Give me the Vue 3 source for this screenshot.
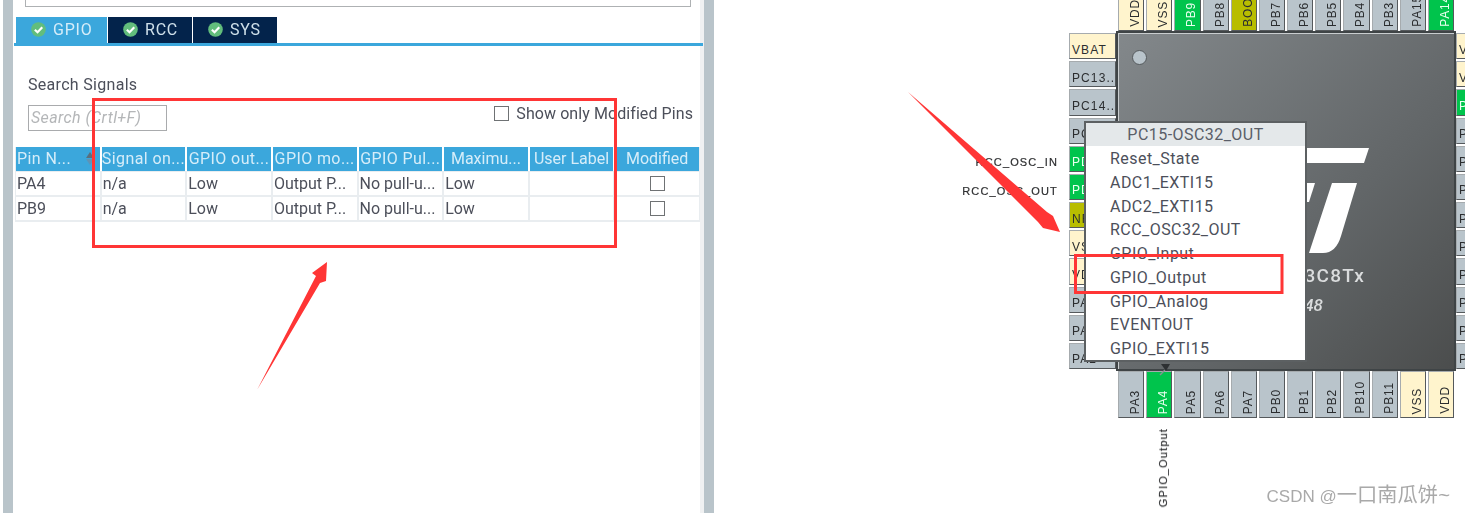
<script setup>
const tabs = [
  { name: 'GPIO', on: true },
  { name: 'RCC', on: false },
  { name: 'SYS', on: false }
]
const heads = ['Pin N...', 'Signal on...', 'GPIO out...', 'GPIO mo...', 'GPIO Pul...', 'Maximu...', 'User Label', 'Modified']
const rows = [
  ['PA4', 'n/a', 'Low', 'Output P...', 'No pull-u...', 'Low', ''],
  ['PB9', 'n/a', 'Low', 'Output P...', 'No pull-u...', 'Low', '']
]
const p = (n, c = 'gray') => ({ n, c })
const topPins = [p('VDD', 'yellow'), p('VSS', 'yellow'), p('PB9', 'green'), p('PB8'), p('BOOT0', 'olive'), p('PB7'), p('PB6'), p('PB5'), p('PB4'), p('PB3'), p('PA15'), p('PA14', 'green')]
const leftPins = [p('VBAT', 'yellow'), p('PC13..'), p('PC14..'), p('PC15..'), p('PD0..', 'green'), p('PD1..', 'green'), p('NRST', 'olive'), p('VSSA', 'yellow'), p('VDDA', 'yellow'), p('PA0..'), p('PA1'), p('PA2')]
const rightPins = [p('VDD', 'yellow'), p('VSS', 'yellow'), p('PA13', 'green'), p('PA12'), p('PA11'), p('PA10'), p('PA9'), p('PA8'), p('PB15'), p('PB14'), p('PB13'), p('PB12')]
const bottomPins = [p('PA3'), p('PA4', 'green'), p('PA5'), p('PA6'), p('PA7'), p('PB0'), p('PB1'), p('PB2'), p('PB10'), p('PB11'), p('VSS', 'yellow'), p('VDD', 'yellow')]
const menu = ['Reset_State', 'ADC1_EXTI15', 'ADC2_EXTI15', 'RCC_OSC32_OUT', 'GPIO_Input', 'GPIO_Output', 'GPIO_Analog', 'EVENTOUT', 'GPIO_EXTI15']
</script>

<template>
  <div class="page">
    <div class="strip strip-left"></div>
    <section class="panel">
      <div class="field"></div>
      <nav class="tabs">
        <div v-for="t in tabs" :key="t.name" class="tab" :class="{ active: t.on }">
          <svg class="tick" viewBox="0 0 14 14" width="15" height="15">
            <circle cx="7" cy="7" r="6.8" fill="#62bd7c" />
            <path d="M3.6 7.2 6.1 9.6 10.5 4.9" fill="none" stroke="#fff" stroke-width="2" />
          </svg>
          <span>{{ t.name }}</span>
        </div>
      </nav>
      <div class="tab-line"></div>
      <div class="filters">
        <div class="search">
          <label>Search Signals</label>
          <div class="search-box">Search (Crtl+F)</div>
        </div>
        <div class="only">
          <span class="box"></span>
          <span>Show only Modified Pins</span>
        </div>
      </div>
      <div class="table">
        <div class="thead">
          <div v-for="(h, i) in heads" :key="h" class="th" :class="{ first: i === 0, wide: i < 5 }">
            {{ h }}
            <span v-if="i === 0" class="sort"><i class="up"></i><i class="down"></i></span>
          </div>
        </div>
        <div v-for="r in rows" :key="r[0]" class="tr">
          <div v-for="(c, i) in r" :key="i" class="td">{{ c }}</div>
          <div class="td check"><span class="box"></span></div>
        </div>
      </div>
    </section>
    <div class="strip strip-right"></div>

    <section class="board">
      <div class="pins top">
        <div v-for="x in topPins" :key="x.n" class="pin v" :class="x.c"><span>{{ x.n }}</span></div>
      </div>
      <div class="pins left">
        <div v-for="x in leftPins" :key="x.n" class="pin h" :class="x.c"><span>{{ x.n }}</span></div>
      </div>
      <div class="chip">
        <div class="dot"></div>
        <svg class="logo" viewBox="1296 141 80 120" width="80" height="120">
          <path fill="#fff" d="M1296 148H1369L1364 163H1296Z" />
          <path fill="#fff" d="M1296 183H1315L1309 202H1296Z" />
          <path fill="#fff" d="M1332 183H1357L1341 236Q1336 253 1323 253H1309Z" />
        </svg>
        <div class="part">STM32F103C8Tx</div>
        <div class="pkg">LQFP48</div>
      </div>
      <div class="pins right">
        <div v-for="x in rightPins" :key="x.n" class="pin h" :class="x.c"><span>{{ x.n }}</span></div>
      </div>
      <div class="pins bottom">
        <div v-for="x in bottomPins" :key="x.n" class="pin v" :class="x.c"><span>{{ x.n }}</span></div>
      </div>

      <div class="signal osc-in">RCC_OSC_IN</div>
      <div class="signal osc-out">RCC_OSC_OUT</div>
      <div class="signal-v">GPIO_Output</div>

      <div class="menu">
        <div class="menu-head">PC15-OSC32_OUT</div>
        <div v-for="m in menu" :key="m" class="menu-item">{{ m }}</div>
      </div>
      <svg class="pushpin" viewBox="0 0 14 14" width="14" height="14">
        <path d="M7 8 2 13" stroke="#8a8f92" stroke-width="1.4" />
        <path d="M3 2H12L8 9Z" fill="#2e3133" />
      </svg>
    </section>

    <svg class="marks" viewBox="0 0 1465 513" width="1465" height="513">
      <rect x="93.5" y="99.5" width="522" height="147" fill="none" stroke="#ff3535" stroke-width="3" />
      <rect x="1075.5" y="255.5" width="206.5" height="37" fill="none" stroke="#ff3535" stroke-width="3" />
      <polygon fill="#ff3535" points="257,390 316,276 312,273 327,262 326,281 320,283" />
      <polygon fill="#ff3535" points="908,92 1047,212 1053,216 1060,232 1043,228 1038,222" />
    </svg>

    <div class="watermark">CSDN @<span class="cjk">一口南瓜饼~</span></div>
  </div>
</template>

<style scoped>
.page {
  position: relative;
  display: flex;
  width: 1465px;
  height: 513px;
  overflow: hidden;
  background: #fff;
  font-family: Roboto, "Liberation Sans", sans-serif;
  color: #4c4f5a;
}
.strip {
  flex: none;
  width: 10px;
  background: #b9c4ca;
}
.strip-left { margin-left: 3px; }
.strip-right { box-shadow: -4px 0 0 #f0f1f2; }
.panel {
  flex: none;
  width: 691px;
  height: 513px;
  box-sizing: border-box;
  filter: blur(.3px);
}
.field {
  width: 666px;
  height: 7px;
  margin-left: 12px;
  box-sizing: border-box;
  border: 1px solid #aeb1b3;
  border-top: 0;
}
.tabs {
  display: flex;
  gap: 1px;
  margin: 10px 0 0 3px;
  height: 26px;
}
.tab {
  display: flex;
  align-items: center;
  gap: 7px;
  height: 26px;
  width: 84px;
  box-sizing: border-box;
  padding: 0 0 1px 15px;
  background: #03234b;
  color: #cfe0ea;
  font-size: 16px;
  letter-spacing: .8px;
}
.tab.active {
  width: 91px;
  background: #3ba7dc;
  color: #d6edf9;
}
.tick { flex: none; }
.tab-line {
  width: 689px;
  height: 3px;
  margin-left: 1px;
  background: #3ba7dc;
}
.filters {
  display: flex;
  justify-content: space-between;
  padding: 30px 11px 0 15px;
  height: 101px;
  box-sizing: border-box;
}
.search label {
  display: block;
  font-size: 16px;
  line-height: 18px;
  letter-spacing: .3px;
}
.search-box {
  width: 139px;
  height: 26px;
  margin-top: 11px;
  box-sizing: border-box;
  border: 1px solid #a9abad;
  padding-left: 2px;
  font-size: 16px;
  line-height: 23px;
  letter-spacing: .4px;
  font-style: italic;
  color: #b4b6b8;
}
.only {
  display: flex;
  align-items: center;
  gap: 7px;
  height: 18px;
  margin-top: 28px;
  font-size: 16px;
  letter-spacing: .08px;
}
.box {
  display: block;
  flex: none;
  width: 15px;
  height: 15px;
  box-sizing: border-box;
  border: 1px solid #6f7274;
  background: #fff;
}
.table {
  width: 685px;
  margin-left: 2px;
  background: #e9edf0;
  padding: 0 1px 2px;
  box-sizing: border-box;
}
.thead, .tr {
  display: grid;
  grid-template-columns: repeat(8, 1fr);
  column-gap: 2px;
}
.thead { background: #fff; }
.th {
  position: relative;
  height: 24px;
  line-height: 23px;
  background: #3ba7dc;
  color: #d6edf9;
  font-size: 16px;
  text-align: center;
  white-space: nowrap;
  overflow: hidden;
}
.th.wide { letter-spacing: .4px; }
.th.first { text-align: left; padding-left: 1px; }
.sort {
  position: absolute;
  right: 6px;
  top: 5px;
  display: flex;
  flex-direction: column;
  gap: 1px;
}
.sort i {
  display: block;
  width: 0;
  height: 0;
  border-left: 4px solid transparent;
  border-right: 4px solid transparent;
}
.sort .up { border-bottom: 6px solid #5b6f7d; }
.sort .down { border-top: 6px solid #5f93b5; }
.tr { margin-top: 2px; }
.td {
  height: 23px;
  line-height: 23px;
  background: #fff;
  font-size: 16px;
  padding-left: 1px;
  white-space: nowrap;
  overflow: hidden;
}
.thead + .tr { margin-top: 1px; }
.check {
  display: flex;
  align-items: center;
  justify-content: center;
  padding: 0;
}

.board {
  position: relative;
  flex: none;
  margin-left: 355px;
  width: 396px;
  height: 418px;
  display: grid;
  grid-template-columns: 47px 340px 1fr;
  grid-template-rows: 31px 340px 47px;
  filter: blur(.3px);
}
.pins { display: flex; gap: 2px; }
.pins.top { grid-column: 2; grid-row: 1; padding: 0 2px; }
.pins.bottom { grid-column: 2; grid-row: 3; padding: 0 2px; }
.pins.left { grid-column: 1; grid-row: 2; flex-direction: column; padding: 2px 0; }
.pins.right { grid-column: 3; grid-row: 2; flex-direction: column; padding: 2px 0; }
.pin {
  flex: 1 1 0;
  min-width: 0;
  min-height: 0;
  display: flex;
  box-sizing: border-box;
  overflow: hidden;
  border: 1px solid #55595c;
  border-top-color: #a6abae;
  border-left-color: #a6abae;
  font-family: "Liberation Sans", Arial, sans-serif;
  font-size: 12px;
  letter-spacing: 1.1px;
  color: #2b2d2f;
  white-space: nowrap;
}
.pin.gray { background: #b9c4cb; }
.pin.yellow { background: #fff4cd; }
.pin.green { background: #00c44c; color: #eafff0; }
.pin.olive { background: #b8bd00; }
.pin.v { justify-content: center; align-items: flex-end; padding: 0 0 3px 8px; letter-spacing: .8px; }
.pin.v span { writing-mode: vertical-rl; transform: rotate(180deg); line-height: 1; }
.pin.h { align-items: center; padding: 7px 0 0 2px; }
.pins.top .pin { border-top: 0; }
.chip {
  grid-column: 2;
  grid-row: 2;
  display: flex;
  flex-direction: column;
  box-sizing: border-box;
  border: 2px solid #3f4446;
  background: linear-gradient(135deg, #83888b, #626668 60%, #4b4d4d);
  box-shadow: inset 1px 1px 0 #c9cdcf;
}
.dot {
  flex: none;
  width: 15px;
  height: 15px;
  box-sizing: border-box;
  margin: 17px 0 0 14px;
  border-radius: 50%;
  border: 1.5px solid #555a5d;
  background: #b9c4cb;
}
.logo {
  flex: none;
  align-self: flex-end;
  margin: 76px 78px 0 0;
}
.part {
  align-self: flex-end;
  margin: 4px 89px 0 0;
  font-size: 19px;
  line-height: 22px;
  letter-spacing: 1.2px;
  font-weight: 500;
  color: #dadcdd;
  white-space: nowrap;
}
.pkg {
  align-self: flex-end;
  margin: 8px 131px 0 0;
  font-size: 17px;
  line-height: 20px;
  font-style: italic;
  font-weight: 500;
  color: #dadcdd;
}
.signal {
  position: absolute;
  right: 407px;
  font-family: "Liberation Sans", Arial, sans-serif;
  font-size: 11px;
  line-height: 14px;
  letter-spacing: 1.15px;
  color: #2e2f31;
  white-space: nowrap;
  -webkit-text-stroke: .2px #2e2f31;
}
.osc-in { top: 155px; }
.osc-out { top: 184px; }
.signal-v {
  position: absolute;
  left: 88px;
  top: 428px;
  writing-mode: vertical-rl;
  transform: rotate(180deg);
  font-family: "Liberation Sans", Arial, sans-serif;
  font-size: 11px;
  line-height: 13px;
  letter-spacing: 1.15px;
  color: #2e2f31;
  white-space: nowrap;
  -webkit-text-stroke: .2px #2e2f31;
}
.menu {
  position: absolute;
  left: 15px;
  top: 121px;
  width: 223px;
  height: 241px;
  box-sizing: border-box;
  border: 2px solid #5c6062;
  background: #fff;
  font-size: 16px;
  letter-spacing: .45px;
}
.menu-head {
  height: 23px;
  margin-bottom: 1px;
  line-height: 24px;
  background: #e4e8ea;
  text-align: center;
  color: #5a5e68;
}
.menu-item {
  height: 23.75px;
  line-height: 23.75px;
  padding-left: 24px;
}
.pushpin {
  position: absolute;
  left: 89px;
  top: 362px;
}
.marks {
  position: absolute;
  left: 0;
  top: 0;
  pointer-events: none;
}
.watermark {
  position: absolute;
  right: 15px;
  top: 485px;
  font-family: "Liberation Sans", "Noto Sans CJK SC", sans-serif;
  font-size: 17px;
  line-height: 20px;
  color: #a9a9a9;
  white-space: nowrap;
}
.cjk { font-size: 20.3px; }
</style>
